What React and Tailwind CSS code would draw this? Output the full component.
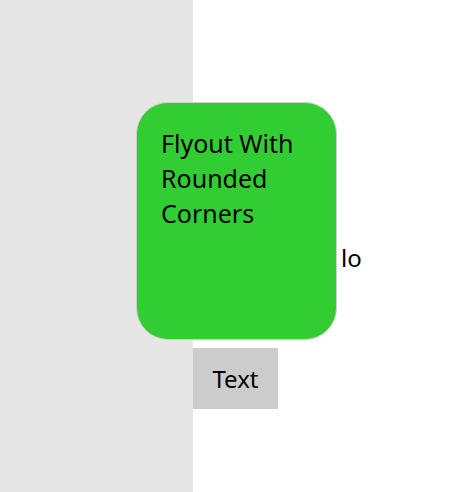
export default function App() {
  return (
    <div
      className="relative flex h-[492px] w-full bg-white text-black"
      style={{ fontFamily: '"Noto Sans", "Open Sans", sans-serif' }}
    >
      <div className="h-full w-[193px] shrink-0 bg-[#e6e6e6]" />

      <div className="flex flex-col pt-[242px]">
        <span className="ml-[148px] text-[24px] leading-[32px]">lo</span>
        <button className="mt-[74px] flex h-[61px] w-[85px] items-center justify-center bg-[#cccccc] text-[24px] leading-[32px]">
          Text
        </button>
      </div>

      {/* flyout */}
      <div className="absolute left-[136px] top-[102px] h-[238px] w-[201px] rounded-[32px] border border-[#cfcfcf] bg-[#32cd32] px-6 pt-[23px]">
        <p className="text-[25px] leading-[35px]">Flyout With Rounded Corners</p>
      </div>
    </div>
  );
}
